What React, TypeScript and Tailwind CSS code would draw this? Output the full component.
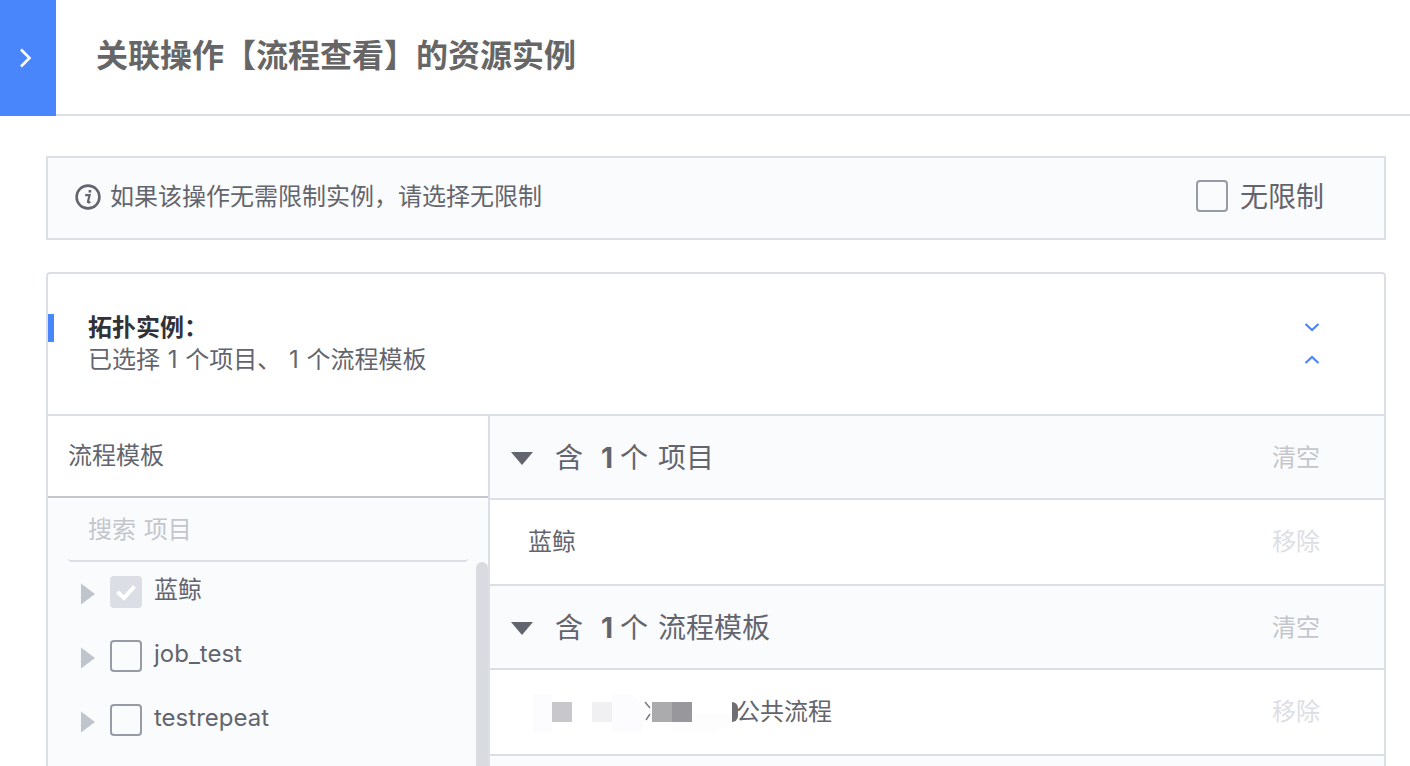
import React from "react";

function Arrow() {
  return (
    <svg width="16" height="22" viewBox="0 0 16 22" className="shrink-0 mt-1">
      <path d="M1 0.5 L15 11 L1 21.5 Z" fill="#bfc5cd" />
    </svg>
  );
}

function TreeRow({ label, checked }: { label: string; checked?: boolean }) {
  return (
    <div className="flex h-16 items-center pl-[12px]">
      <div className="w-[30px] flex">
        <Arrow />
      </div>
      {checked ? (
        <div className="flex h-8 w-8 shrink-0 items-center justify-center rounded bg-[#dcdee5]">
          <svg width="24" height="20" viewBox="0 0 24 20">
            <path d="M3.5 10 L10 16 L20.5 4.5" fill="none" stroke="#ffffff" strokeWidth="4" />
          </svg>
        </div>
      ) : (
        <div className="h-8 w-8 shrink-0 rounded border-2 border-[#979ba5]" />
      )}
      <span className="ml-3 -mt-1 text-2xl leading-8 text-[#63656e]">{label}</span>
    </div>
  );
}

function SectionHead({ name }: { name: string }) {
  return (
    <div className="flex h-[84px] items-center border-b-2 border-[#dcdee5] bg-[#fafbfd] pl-[21px] pr-[64px]">
      <svg width="22" height="13" viewBox="0 0 22 13" className="shrink-0 mt-[2px]">
        <path d="M0 0 H22 L11 13 Z" fill="#63656e" />
      </svg>
      <div className="ml-[22px] mt-[2px] flex text-[28px] leading-10 text-[#63656e]">
        <span>含</span>
        <span className="ml-[18px] font-bold">1</span>
        <span className="ml-[7px]">个</span>
        <span className="ml-[10px]">{name}</span>
      </div>
      <span className="ml-auto mt-[2px] text-2xl text-[#c4c6cc]">清空</span>
    </div>
  );
}

function Remove() {
  return <span className="ml-auto text-2xl text-[#dcdee5]">移除</span>;
}

export default function App() {
  return (
    <div className="h-[766px] w-[1410px] overflow-hidden bg-white font-['Inter','Noto_Sans_CJK_SC',sans-serif] text-[#63656e]">
      <header className="flex h-[116px] border-b-2 border-[#dcdee5]">
        <div className="-mb-[2px] flex h-[116px] w-14 items-center justify-center bg-[#4a86fb]">
          <svg width="16" height="22" viewBox="0 0 16 22" className="-ml-1">
            <path d="M3 2.5 L11.5 11 L3 19.5" fill="none" stroke="#ffffff" strokeWidth="2.6" />
          </svg>
        </div>
        <h1 className="ml-10 -mt-[3px] self-center text-[32px] font-bold leading-[44px] text-[#666666]">
          关联操作【流程查看】的资源实例
        </h1>
      </header>

      <main className="px-[46px] pt-10">
        <div className="flex h-[84px] w-[1340px] items-center border-2 border-[#dcdee5] bg-[#fafbfd] pl-[27px] pr-[60px]">
          <svg width="26" height="26" viewBox="0 0 26 26" className="shrink-0 -mt-[2px]">
            <circle cx="13" cy="13" r="11.4" fill="none" stroke="#63656e" strokeWidth="2.6" />
            <path d="M13.6 6 h2.6 v2.6 h-2.6 Z" fill="#63656e" />
            <path d="M10.2 11.2 H14.6 L13 17.4 Q12.8 19 15.4 18" fill="none" stroke="#63656e" strokeWidth="2.2" />
          </svg>
          <span className="ml-[9px] -mt-[2px] text-2xl leading-8">如果该操作无需限制实例，请选择无限制</span>
          <div className="ml-auto -mt-1 h-8 w-8 rounded border-2 border-[#979ba5]" />
          <span className="ml-3 -mt-[2px] text-[28px] leading-10">无限制</span>
        </div>

        <section className="mt-8 w-[1340px] rounded border-2 border-b-0 border-[#dcdee5]">
          <div className="flex h-[142px] border-b-2 border-[#dcdee5]">
            <div className="mt-10 h-7 w-1.5 bg-[#4a86fb]" />
            <div className="ml-[34px] mt-[38px] flex flex-col">
              <span className="text-2xl font-bold leading-8 text-[#313238]">拓扑实例：</span>
              <span className="text-2xl leading-8 [word-spacing:1px]">已选择 1 个项目、 1 个流程模板</span>
            </div>
            <div className="ml-auto mr-[64px] mt-[48px] flex flex-col gap-[23px]">
              <svg width="16" height="10" viewBox="0 0 16 10">
                <path d="M1.5 2 L8 8 L14.5 2" fill="none" stroke="#4a86fb" strokeWidth="2.2" />
              </svg>
              <svg width="16" height="10" viewBox="0 0 16 10">
                <path d="M1.5 8 L8 2 L14.5 8" fill="none" stroke="#4a86fb" strokeWidth="2.2" />
              </svg>
            </div>
          </div>

          <div className="flex">
            <aside className="w-[442px] shrink-0 border-r-2 border-[#dcdee5]">
              <div className="flex h-[82px] items-center border-b-2 border-[#c4c6cc] pl-5 pr-2">
                <span className="text-2xl leading-8">流程模板</span>
              </div>
              <div className="relative h-[270px] bg-[#fafbfd] px-5">
                <div className="flex h-16 items-center rounded-b border-b-2 border-[#dcdee5] pl-5">
                  <span className="mt-[2px] text-2xl leading-8 text-[#c4c6cc] [word-spacing:1px]">搜索 项目</span>
                </div>
                <div className="-mt-[2px]">
                  <TreeRow label="蓝鲸" checked />
                  <TreeRow label="job_test" />
                  <TreeRow label="testrepeat" />
                </div>
                <div className="absolute right-0 top-16 h-[220px] w-3 rounded-t-md bg-[#dadbe0]" />
              </div>
            </aside>

            <div className="flex-1">
              <SectionHead name="项目" />
              <div className="flex h-[86px] items-center border-b-2 border-[#dcdee5] pl-[38px] pr-[64px]">
                <span className="text-2xl leading-8">蓝鲸</span>
                <Remove />
              </div>
              <SectionHead name="流程模板" />
              <div className="relative flex h-[86px] items-center border-b-2 border-[#dcdee5] pl-[62px] pr-[64px]">
                <svg width="894" height="84" viewBox="0 0 894 84" className="absolute left-0 top-0">
                  <path d="M43 24 H62 V62 H43 Z M122 24 H140 Q160 34 152 62 H122 Z" fill="#fcfcfe" />
                  <path d="M162 44 Q172 62 202 62 H222 Q240 60 244 44 Z" fill="#fdfdfe" />
                  <path d="M155 32 L160 38 M160 44 L156 50" fill="none" stroke="#77777c" strokeWidth="1.4" />
                </svg>
                <div className="relative h-5 w-5 bg-[#c8c8cc]" />
                <div className="relative ml-5 h-5 w-5 bg-[#f0f0f3]" />
                <div className="relative ml-10 h-5 w-5 bg-[#ababae]" />
                <div className="relative h-5 w-5 bg-[#98989c]" />
                <div className="relative ml-10 -mr-[2px] h-5 w-1.5 rounded-r-full bg-[#6f6f73]" />
                <span className="relative text-2xl leading-8">公共流程</span>
                <Remove />
              </div>
              <div className="h-8 bg-[#fafbfd]" />
            </div>
          </div>
        </section>
      </main>
    </div>
  );
}
